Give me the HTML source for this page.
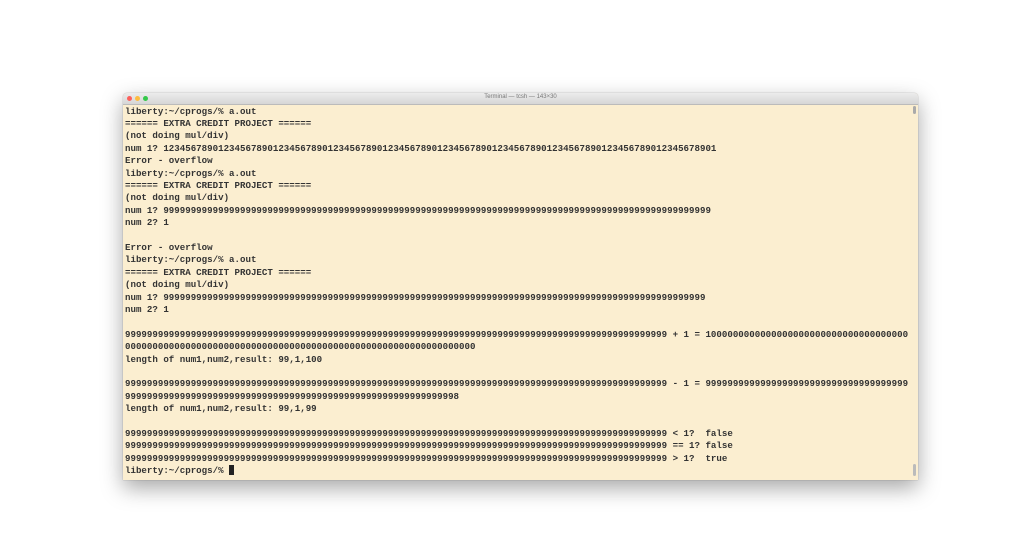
<!DOCTYPE html>
<html><head><style>
html,body{margin:0;padding:0;background:#fff;width:1024px;height:545px;overflow:hidden}
.win{position:absolute;left:123px;top:93px;width:795px;height:387px;background:#fbeed0;box-shadow:0 8px 22px rgba(0,0,0,.35),0 0 1px rgba(0,0,0,.4);border-radius:4px 4px 0 0;overflow:hidden}
.tb{height:11px;background:linear-gradient(#ececec,#d6d6d6);border-bottom:1px solid #bbb;position:relative}
.tb .t{position:absolute;left:0;right:0;top:1px;text-align:center;font:6px "Liberation Sans",sans-serif;color:#777}
.d{position:absolute;top:3px;width:5px;height:5px;border-radius:50%}
pre{margin:0;position:absolute;left:2px;top:12.5px;font:9.13px/12.4px "Liberation Mono",monospace;color:#333;font-weight:bold;white-space:pre}
.cur{display:inline-block;width:5px;height:10px;background:#222;vertical-align:-2px}
.sb{position:absolute;right:2px;top:13px;width:3px;height:8px;background:#aaa;border-radius:2px}
.sb2{position:absolute;right:2px;bottom:4px;width:3px;height:12px;background:#bbb;border-radius:2px}
</style></head><body>
<div class="win">
<div class="tb"><span class="d" style="left:4px;background:#fc605c"></span><span class="d" style="left:12px;background:#fdbc40"></span><span class="d" style="left:20px;background:#34c84a"></span><div class="t">Terminal — tcsh — 143×30</div></div>
<div class="sb"></div><div class="sb2"></div>
<pre>liberty:~/cprogs/% a.out
====== EXTRA CREDIT PROJECT ======
(not doing mul/div)
num 1? 12345678901234567890123456789012345678901234567890123456789012345678901234567890123456789012345678901
Error - overflow
liberty:~/cprogs/% a.out
====== EXTRA CREDIT PROJECT ======
(not doing mul/div)
num 1? 9999999999999999999999999999999999999999999999999999999999999999999999999999999999999999999999999999
num 2? 1

Error - overflow
liberty:~/cprogs/% a.out
====== EXTRA CREDIT PROJECT ======
(not doing mul/div)
num 1? 999999999999999999999999999999999999999999999999999999999999999999999999999999999999999999999999999
num 2? 1

999999999999999999999999999999999999999999999999999999999999999999999999999999999999999999999999999 + 1 = 1000000000000000000000000000000000000
0000000000000000000000000000000000000000000000000000000000000000
length of num1,num2,result: 99,1,100

999999999999999999999999999999999999999999999999999999999999999999999999999999999999999999999999999 - 1 = 9999999999999999999999999999999999999
9999999999999999999999999999999999999999999999999999999999998
length of num1,num2,result: 99,1,99

999999999999999999999999999999999999999999999999999999999999999999999999999999999999999999999999999 &lt; 1?  false
999999999999999999999999999999999999999999999999999999999999999999999999999999999999999999999999999 == 1? false
999999999999999999999999999999999999999999999999999999999999999999999999999999999999999999999999999 &gt; 1?  true
liberty:~/cprogs/% <span class="cur"></span></pre>
</div>
</body></html>
